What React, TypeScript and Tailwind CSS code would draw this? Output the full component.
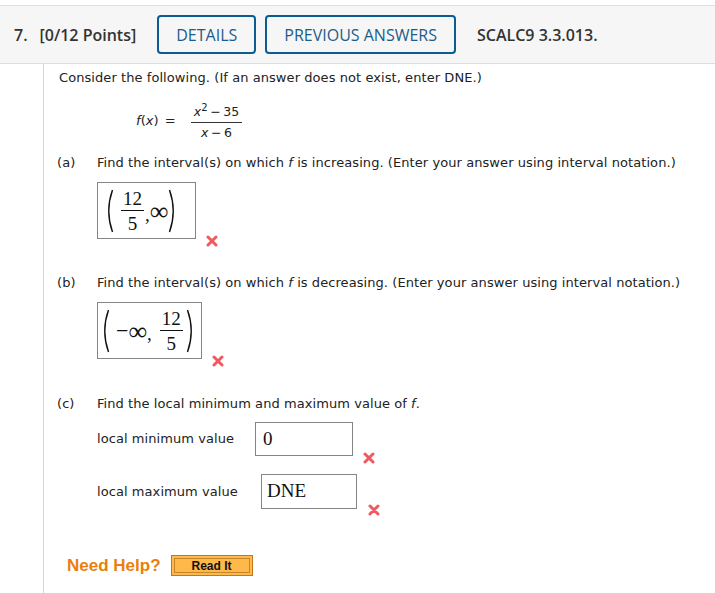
import React from 'react';

const RedX = ({ className = '' }: { className?: string }) => (
  <svg className={className} width="12" height="12" viewBox="0 0 12 12">
    <path d="M2 2L10 10M10 2L2 10" stroke="#f0484f" strokeWidth="3" strokeLinecap="round" opacity="0.9" />
  </svg>
);

const Paren = ({ right = false, h = 44 }: { right?: boolean; h?: number }) => (
  <svg width="9" height={h} viewBox={`0 0 9 ${h}`} className="shrink-0">
    {right ? (
      <path d={`M1.5 1 Q9 ${h / 2} 1.5 ${h - 1}`} stroke="#111" strokeWidth="1.4" fill="none" />
    ) : (
      <path d={`M7.5 1 Q0 ${h / 2} 7.5 ${h - 1}`} stroke="#111" strokeWidth="1.4" fill="none" />
    )}
  </svg>
);

const Frac = () => (
  <span className="inline-flex flex-col items-center leading-none text-[19px]">
    <span className="px-[2px] pb-[2px]">12</span>
    <span className="w-full border-t border-[#111]" />
    <span className="pt-[3px]">5</span>
  </span>
);

const App = () => {
  return (
    <div className="w-[715px] h-[593px] bg-white overflow-hidden flex flex-col text-[#222] font-['DejaVu_Sans',Verdana,sans-serif] text-[13px] tracking-[0.07px]">
      {/* header */}
      <div className="mt-[5px] h-[59px] shrink-0 flex items-center border-y border-[#dedede] bg-[#f6f6f6] font-['Open_Sans',sans-serif] text-[16px] text-[#333] tracking-normal">
        <span className="ml-[14px] font-semibold">7.</span>
        <span className="ml-[12px] font-semibold">[0/12 Points]</span>
        <button className="ml-[21px] h-[39px] px-[17px] rounded-[4px] border-2 border-[#0d5c8f] text-[#1c5c8a]">
          DETAILS
        </button>
        <button className="ml-[9px] h-[39px] px-[17px] rounded-[4px] border-2 border-[#0d5c8f] text-[#1c5c8a]">
          PREVIOUS ANSWERS
        </button>
        <span className="ml-[21px] font-semibold">SCALC9 3.3.013.</span>
      </div>

      {/* body */}
      <div className="flex-1 ml-[43px] border-l border-[#d6d6d6] pl-[15px] pt-[6px] flex flex-col">
        <p className="leading-[16px]">Consider the following. (If an answer does not exist, enter DNE.)</p>

        <div className="mt-[18px] ml-[77px] flex items-center">
          <span className="mb-[4px]"><i>f</i>(<i>x</i>)</span>
          <span className="ml-[6px] mb-[4px]">=</span>
          <span className="ml-[15px] inline-flex flex-col items-center leading-[16px] text-[12.5px]">
            <span className="px-[3px]">
              <i>x</i>
              <sup className="text-[10px]">2</sup>&thinsp;−&thinsp;35
            </span>
            <span className="w-full border-t border-[#333] my-[2px]" />
            <span>
              <i>x</i>&thinsp;−&thinsp;6
            </span>
          </span>
        </div>

        {/* (a) */}
        <div className="mt-[14px] flex leading-[16px]">
          <span className="w-[40px] -ml-[2px]">(a)</span>
          <span>
            Find the interval(s) on which <i>f</i> is increasing. (Enter your answer using interval notation.)
          </span>
        </div>
        <div className="mt-[11px] ml-[38px] flex items-end">
          <div className="w-[99px] h-[57px] border border-[#858585] flex items-center pl-[7px] font-['Liberation_Serif',serif] text-[#111] tracking-normal">
            <Paren />
            <span className="ml-[7px]"><Frac /></span>
            <span className="text-[19px] ml-[1px] mt-[10px]">,</span>
            <span className="text-[26px] leading-none mt-[2px]">∞</span>
            <Paren right />
          </div>
          <RedX className="ml-[10px] -mb-[8px]" />
        </div>

        {/* (b) */}
        <div className="mt-[36px] flex leading-[16px]">
          <span className="w-[40px] -ml-[2px]">(b)</span>
          <span>
            Find the interval(s) on which <i>f</i> is decreasing. (Enter your answer using interval notation.)
          </span>
        </div>
        <div className="mt-[11px] ml-[38px] flex items-end">
          <div className="w-[105px] h-[57px] border border-[#858585] flex items-center pl-[3px] font-['Liberation_Serif',serif] text-[#111] tracking-normal">
            <Paren />
            <span className="ml-[6px] text-[22px] leading-none">−</span>
            <span className="text-[26px] leading-none mt-[2px]">∞</span>
            <span className="text-[19px] mt-[8px] mr-[8px]">,</span>
            <Frac />
            <span className="ml-[3px]"><Paren right /></span>
          </div>
          <RedX className="ml-[10px] -mb-[8px]" />
        </div>

        {/* (c) */}
        <div className="mt-[37px] flex leading-[16px]">
          <span className="w-[40px] -ml-[2px]">(c)</span>
          <span>
            Find the local minimum and maximum value of <i>f</i>.
          </span>
        </div>
        <div className="mt-[10px] ml-[38px] flex items-end">
          <div className="flex items-center h-[34px]">
            <span className="w-[158px]">local minimum value</span>
            <div className="w-[98px] h-[34px] border border-[#858585] flex items-center pl-[7px] font-['Liberation_Serif',serif] text-[19px] text-[#111]">
              0
            </div>
          </div>
          <RedX className="ml-[10px] -mb-[8px]" />
        </div>
        <div className="mt-[18px] ml-[38px] flex items-end">
          <div className="flex items-center h-[35px]">
            <span className="w-[164px]">local maximum value</span>
            <div className="w-[96px] h-[35px] border border-[#858585] flex items-center pl-[5px] font-['Liberation_Serif',serif] text-[19px] text-[#111] tracking-normal">
              DNE
            </div>
          </div>
          <RedX className="ml-[11px] -mb-[7px]" />
        </div>

        {/* help */}
        <div className="mt-[44px] ml-[8px] flex items-center font-['Liberation_Sans',Arial,sans-serif] tracking-normal">
          <span className="text-[17px] font-bold text-[#ea7f0c]">Need Help?</span>
          <button className="ml-[10px] w-[82px] h-[21px] p-[2px] border border-[#c7761b] bg-[#ffb84a]">
            <span className="flex h-full items-center justify-center border border-[#c7862b] text-[12px] font-bold text-[#111]">
              Read It
            </span>
          </button>
        </div>
      </div>
    </div>
  );
};

export default App;
